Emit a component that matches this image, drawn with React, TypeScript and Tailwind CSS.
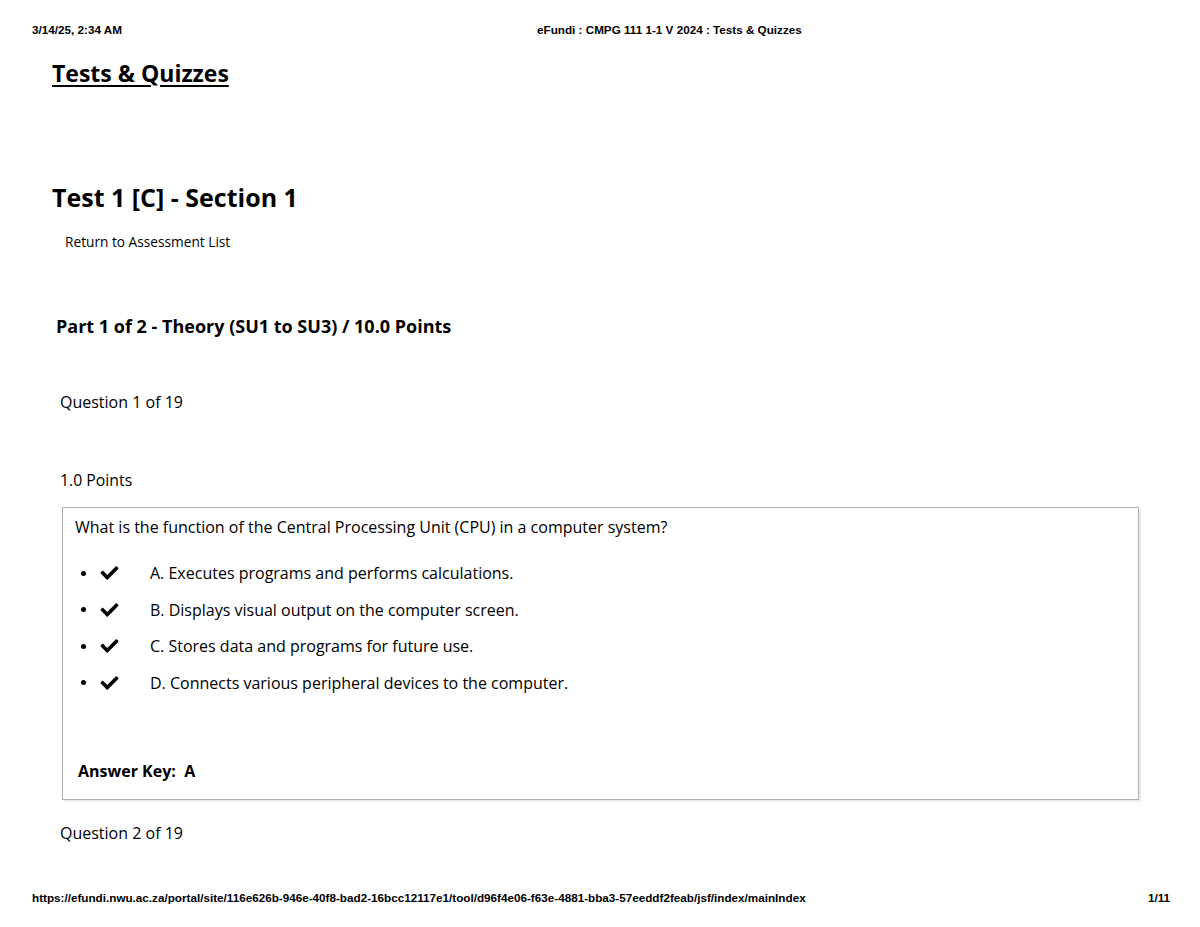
import { FaCheck } from "react-icons/fa";

const options = [
  "A. Executes programs and performs calculations.",
  "B. Displays visual output on the computer screen.",
  "C. Stores data and programs for future use.",
  "D. Connects various peripheral devices to the computer.",
];

const url =
  "https://efundi.nwu.ac.za/portal/site/116e626b-946e-40f8-bad2-16bcc12117e1/tool/d96f4e06-f63e-4881-bba3-57eeddf2feab/jsf/index/mainIndex";

export default function App() {
  return (
    <div className="h-[927px] w-[1200px] overflow-hidden bg-white text-black">
      {/* print header */}
      <div className="flex pt-[24px] pl-[32px] text-[11.7px] leading-[12px] font-bold font-['Liberation_Sans',Arial,sans-serif]">
        <span className="w-[505px]">3/14/25, 2:34 AM</span>
        <span>eFundi : CMPG 111 1-1 V 2024 : Tests &amp; Quizzes</span>
      </div>

      <div className="font-['Open_Sans','Noto_Sans',sans-serif]">
        <h1 className="mt-[22px] ml-[52px] text-[23px] leading-[30px] font-bold underline underline-offset-[3px] decoration-2">
          Tests &amp; Quizzes
        </h1>

        <h2 className="mt-[93px] ml-[52px] text-[25px] leading-[32px] font-bold">
          Test 1 [C] - Section 1
        </h2>

        <div className="mt-[20px] ml-[65px] text-[13.7px] leading-[18px]">
          Return to Assessment List
        </div>

        <h3 className="mt-[64px] ml-[56px] text-[18px] leading-[22px] font-bold">
          Part 1 of 2 - Theory (SU1 to SU3) / 10.0 Points
        </h3>

        <div className="mt-[55px] ml-[60px] text-[16px] leading-[20px]">Question 1 of 19</div>

        <div className="mt-[58px] ml-[60px] text-[15.8px] leading-[20px]">1.0 Points</div>

        <div className="mt-[17px] ml-[62px] w-[1077px] h-[293px] border border-[#aeaeae] shadow-[2px_2px_0_#ececec] pt-[9px] pl-[12px] pb-[18px] flex flex-col">
          <p className="text-[16px] leading-[20px]">
            What is the function of the Central Processing Unit (CPU) in a computer system?
          </p>
          <ul className="mt-[18px]">
            {options.map((o) => (
              <li key={o} className="h-[36.5px] flex items-center text-[16px]">
                <span className="ml-[6px] w-[5px] h-[5px] rounded-full bg-black" />
                <FaCheck className="ml-[13px] w-[21px] h-[18px]" />
                <span className="ml-[30px]">{o}</span>
              </li>
            ))}
          </ul>
          <div className="mt-auto ml-[3px] text-[16px] leading-[20px] font-bold">
            Answer Key:&nbsp; A
          </div>
        </div>

        <div className="mt-[23px] ml-[60px] text-[16px] leading-[20px]">Question 2 of 19</div>
      </div>

      {/* print footer */}
      <div className="mt-[49px] flex pl-[32px] text-[11.7px] leading-[12px] font-bold font-['Liberation_Sans',Arial,sans-serif]">
        <span className="w-[1116px] whitespace-nowrap overflow-hidden">{url}</span>
        <span>1/11</span>
      </div>
    </div>
  );
}
